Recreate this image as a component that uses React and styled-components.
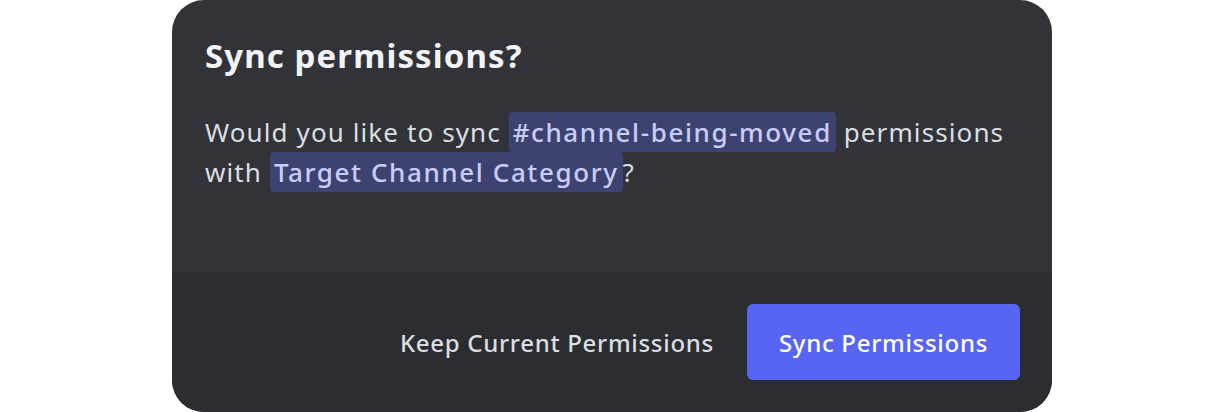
import React from 'react';
import styled, { createGlobalStyle } from 'styled-components';

const GlobalStyle = createGlobalStyle`
  html, body {
    margin: 0;
    padding: 0;
    background: #ffffff;
  }
  body {
    font-family: "Noto Sans", "Open Sans", sans-serif;
  }
`;

const Page = styled.div`
  width: 1224px;
  height: 412px;
  display: flex;
  justify-content: center;
`;

const Modal = styled.div`
  width: 880px;
  height: 412px;
  background: #313338;
  border-radius: 32px;
  overflow: hidden;
  display: flex;
  flex-direction: column;
`;

const Content = styled.div`
  flex: 1;
  padding: 34px 32px 0 33px;
`;

const Title = styled.h1`
  margin: 0 0 34px;
  font-size: 33px;
  line-height: 44px;
  font-weight: 700;
  letter-spacing: 1.1px;
  color: #f2f3f5;
`;

const Body = styled.p`
  margin: 0;
  font-size: 26px;
  line-height: 40px;
  letter-spacing: 1.1px;
  color: #dbdee1;
`;

const Mention = styled.span`
  background: #3d4270;
  color: #c9cdfb;
  font-weight: 500;
  letter-spacing: 1.6px;
  border-radius: 4px;
  padding: 2px 4px;
`;

const Footer = styled.div`
  height: 140px;
  box-sizing: border-box;
  background: #2b2d31;
  padding: 32px;
  display: flex;
  justify-content: flex-end;
  align-items: center;
  gap: 33px;
`;

const Button = styled.button`
  height: 76px;
  border: none;
  border-radius: 6px;
  font-family: inherit;
  font-size: 24px;
  font-weight: 500;
  letter-spacing: 0.7px;
  cursor: pointer;
  padding: ${(p) => (p.$primary ? '0 32px' : '0')};
  background: ${(p) => (p.$primary ? '#5865f2' : 'transparent')};
  color: ${(p) => (p.$primary ? '#ffffff' : '#dbdee1')};
`;

export default function App() {
  return (
    <>
      <GlobalStyle />
      <Page>
        <Modal>
          <Content>
            <Title>Sync permissions?</Title>
            <Body>
              Would you like to sync <Mention>#channel-being-moved</Mention> permissions with{' '}
              <Mention>Target Channel Category</Mention>?
            </Body>
          </Content>
          <Footer>
            <Button>Keep Current Permissions</Button>
            <Button $primary>Sync Permissions</Button>
          </Footer>
        </Modal>
      </Page>
    </>
  );
}
